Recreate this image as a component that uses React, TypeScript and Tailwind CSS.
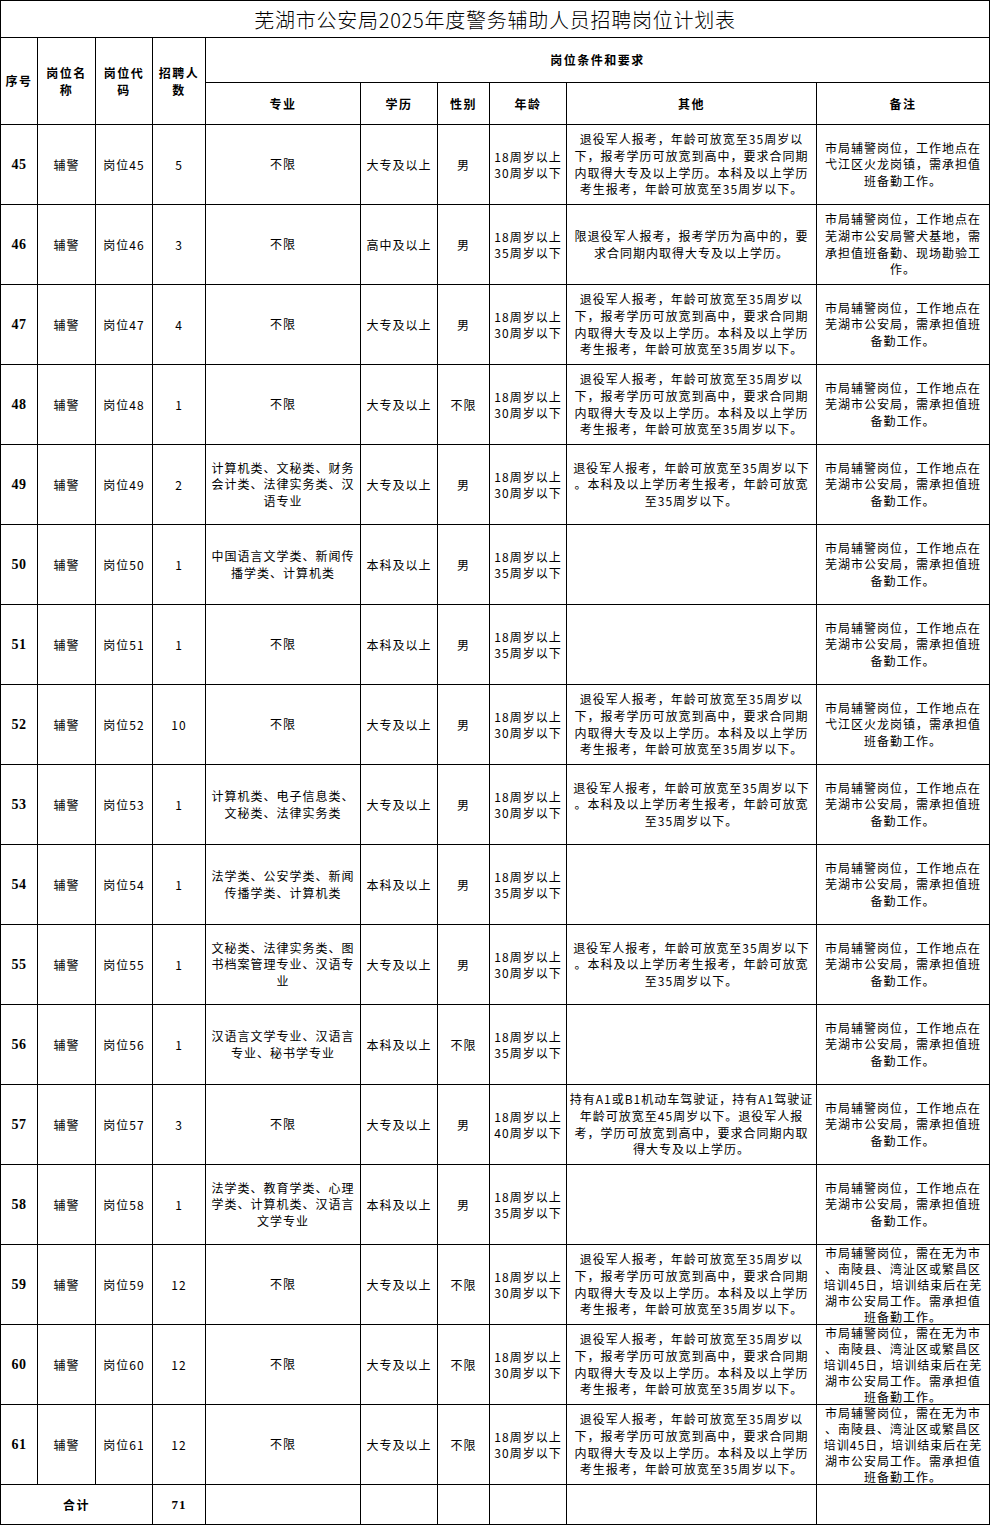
import React from "react";

const A = [
  "退役军人报考，年龄可放宽至35周岁以",
  "下，报考学历可放宽到高中，要求合同期",
  "内取得大专及以上学历。本科及以上学历",
  "考生报考，年龄可放宽至35周岁以下。",
];
const C = [
  "退役军人报考，年龄可放宽至35周岁以下",
  "。本科及以上学历考生报考，年龄可放宽",
  "至35周岁以下。",
];
const RYJ = ["市局辅警岗位，工作地点在", "弋江区火龙岗镇，需承担值", "班备勤工作。"];
const RB = ["市局辅警岗位，工作地点在", "芜湖市公安局，需承担值班", "备勤工作。"];
const RD = [
  "市局辅警岗位，需在无为市",
  "、南陵县、湾沚区或繁昌区",
  "培训45日，培训结束后在芜",
  "湖市公安局工作。需承担值",
  "班备勤工作。",
];
const R46 = ["市局辅警岗位，工作地点在", "芜湖市公安局警犬基地，需", "承担值班备勤、现场勘验工", "作。"];

type Row = {
  no: string;
  num: string;
  major: string[];
  edu: string;
  sex: string;
  ageMax: string;
  other: string[];
  remark: string[];
};

const rows: Row[] = [
  { no: "45", num: "5", major: ["不限"], edu: "大专及以上", sex: "男", ageMax: "30", other: A, remark: RYJ },
  {
    no: "46",
    num: "3",
    major: ["不限"],
    edu: "高中及以上",
    sex: "男",
    ageMax: "35",
    other: ["限退役军人报考，报考学历为高中的，要", "求合同期内取得大专及以上学历。"],
    remark: R46,
  },
  { no: "47", num: "4", major: ["不限"], edu: "大专及以上", sex: "男", ageMax: "30", other: A, remark: RB },
  { no: "48", num: "1", major: ["不限"], edu: "大专及以上", sex: "不限", ageMax: "30", other: A, remark: RB },
  {
    no: "49",
    num: "2",
    major: ["计算机类、文秘类、财务", "会计类、法律实务类、汉", "语专业"],
    edu: "大专及以上",
    sex: "男",
    ageMax: "30",
    other: C,
    remark: RB,
  },
  {
    no: "50",
    num: "1",
    major: ["中国语言文学类、新闻传", "播学类、计算机类"],
    edu: "本科及以上",
    sex: "男",
    ageMax: "35",
    other: [],
    remark: RB,
  },
  { no: "51", num: "1", major: ["不限"], edu: "本科及以上", sex: "男", ageMax: "35", other: [], remark: RB },
  { no: "52", num: "10", major: ["不限"], edu: "大专及以上", sex: "男", ageMax: "30", other: A, remark: RYJ },
  {
    no: "53",
    num: "1",
    major: ["计算机类、电子信息类、", "文秘类、法律实务类"],
    edu: "大专及以上",
    sex: "男",
    ageMax: "30",
    other: C,
    remark: RB,
  },
  {
    no: "54",
    num: "1",
    major: ["法学类、公安学类、新闻", "传播学类、计算机类"],
    edu: "本科及以上",
    sex: "男",
    ageMax: "35",
    other: [],
    remark: RB,
  },
  {
    no: "55",
    num: "1",
    major: ["文秘类、法律实务类、图", "书档案管理专业、汉语专", "业"],
    edu: "大专及以上",
    sex: "男",
    ageMax: "30",
    other: C,
    remark: RB,
  },
  {
    no: "56",
    num: "1",
    major: ["汉语言文学专业、汉语言", "专业、秘书学专业"],
    edu: "本科及以上",
    sex: "不限",
    ageMax: "35",
    other: [],
    remark: RB,
  },
  {
    no: "57",
    num: "3",
    major: ["不限"],
    edu: "大专及以上",
    sex: "男",
    ageMax: "40",
    other: [
      "持有A1或B1机动车驾驶证，持有A1驾驶证",
      "年龄可放宽至45周岁以下。退役军人报",
      "考，学历可放宽到高中，要求合同期内取",
      "得大专及以上学历。",
    ],
    remark: RB,
  },
  {
    no: "58",
    num: "1",
    major: ["法学类、教育学类、心理", "学类、计算机类、汉语言", "文学专业"],
    edu: "本科及以上",
    sex: "男",
    ageMax: "35",
    other: [],
    remark: RB,
  },
  { no: "59", num: "12", major: ["不限"], edu: "大专及以上", sex: "不限", ageMax: "30", other: A, remark: RD },
  { no: "60", num: "12", major: ["不限"], edu: "大专及以上", sex: "不限", ageMax: "30", other: A, remark: RD },
  { no: "61", num: "12", major: ["不限"], edu: "大专及以上", sex: "不限", ageMax: "30", other: A, remark: RD },
];

function Cell({ children, className = "" }: { children?: React.ReactNode; className?: string }) {
  return (
    <div className={`bg-white flex flex-col items-center justify-center text-center overflow-hidden ${className}`}>
      {children}
    </div>
  );
}

function Lines({ lines, leading = "leading-[16.6px]" }: { lines: string[]; leading?: string }) {
  return (
    <>
      {lines.map((l, i) => (
        <span key={i} className={`block whitespace-nowrap ${leading}`}>
          {l}
        </span>
      ))}
    </>
  );
}

const H = "font-bold text-[12px] tracking-[1.5px]";

export default function App() {
  return (
    <div className="w-[990px] bg-white text-black font-['Noto_Sans_CJK_SC',sans-serif] text-[12px] tracking-[1px]">
      <div className="grid grid-cols-[36px_57px_56px_52px_154px_76px_51px_76px_249px_172px] grid-rows-[36px_44px_41px_repeat(17,79px)_39px] gap-px bg-black p-px">
        <Cell className="col-span-10 text-[20px] font-light tracking-[0.75px] leading-none pt-px">
          芜湖市公安局2025年度警务辅助人员招聘岗位计划表
        </Cell>

        <Cell className={`row-span-2 ${H}`}>序号</Cell>
        <Cell className={`row-span-2 ${H} leading-[17px]`}>
          <span className="block">岗位名</span>
          <span className="block">称</span>
        </Cell>
        <Cell className={`row-span-2 ${H} leading-[17px]`}>
          <span className="block">岗位代</span>
          <span className="block">码</span>
        </Cell>
        <Cell className={`row-span-2 ${H} leading-[17px]`}>
          <span className="block">招聘人</span>
          <span className="block">数</span>
        </Cell>
        <Cell className={`col-span-6 ${H}`}>岗位条件和要求</Cell>
        <Cell className={H}>专业</Cell>
        <Cell className={H}>学历</Cell>
        <Cell className={H}>性别</Cell>
        <Cell className={H}>年龄</Cell>
        <Cell className={H}>其他</Cell>
        <Cell className={H}>备注</Cell>

        {rows.map((r) => (
          <React.Fragment key={r.no}>
            <Cell className="font-['Liberation_Serif',serif] font-bold text-[14px] tracking-[0.5px]">{r.no}</Cell>
            <Cell>辅警</Cell>
            <Cell>岗位{r.no}</Cell>
            <Cell>{r.num}</Cell>
            <Cell>
              <Lines lines={r.major} />
            </Cell>
            <Cell>{r.edu}</Cell>
            <Cell>{r.sex}</Cell>
            <Cell>
              <Lines lines={["18周岁以上", `${r.ageMax}周岁以下`]} leading="leading-[16px]" />
            </Cell>
            <Cell>
              <Lines lines={r.other} />
            </Cell>
            <Cell>
              <Lines lines={r.remark} leading={r.remark.length > 4 ? "leading-[16px]" : "leading-[16.6px]"} />
            </Cell>
          </React.Fragment>
        ))}

        <Cell className={`col-span-3 ${H}`}>合计</Cell>
        <Cell className="font-['Liberation_Serif',serif] font-bold text-[13px]">71</Cell>
        <Cell />
        <Cell />
        <Cell />
        <Cell />
        <Cell />
        <Cell />
      </div>
    </div>
  );
}
